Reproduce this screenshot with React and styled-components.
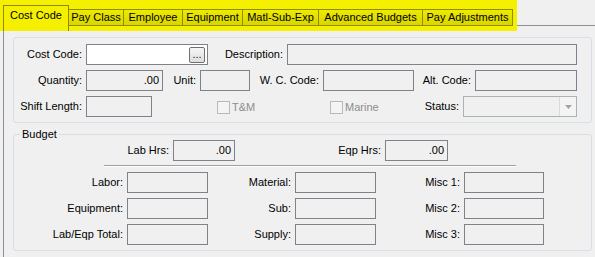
import React from "react";
import styled, { createGlobalStyle } from "styled-components";

const GlobalStyle = createGlobalStyle`
  html, body {
    margin: 0;
    padding: 0;
    background: #f0f0f0;
  }
  body {
    font-family: "Liberation Sans", Arial, sans-serif;
    font-size: 11px;
    color: #000;
  }
`;

const tabs = [
  { label: "Cost Code", w: 66, active: true },
  { label: "Pay Class", w: 56 },
  { label: "Employee", w: 60 },
  { label: "Equipment", w: 61 },
  { label: "Matl-Sub-Exp", w: 77 },
  { label: "Advanced Budgets", w: 105 },
  { label: "Pay Adjustments", w: 91 },
];

const Field = ({ label, lw, w, value, white, children }) => (
  <>
    <Label $w={lw}>{label}</Label>
    <TextBox $w={w} $white={white}>
      {value}
      {children}
    </TextBox>
  </>
);

const Check = ({ label, w }) => (
  <CheckItem $w={w}>
    <CheckBox />
    <span>{label}</span>
  </CheckItem>
);

const CostCodeTab = () => {
  return (
    <Window>
      <GlobalStyle />
      <TabHeader>
        <Highlight>
          {tabs.map((t) => (
            <Tab key={t.label} $w={t.w} $active={t.active}>
              {t.label}
            </Tab>
          ))}
        </Highlight>
        <HeaderRest />
      </TabHeader>

      <Pane>
        <Group>
          <Row>
            <Field label="Cost Code:" lw={72} w={122} white>
              <EllipsisButton>...</EllipsisButton>
            </Field>
            <Field label="Description:" lw={79} w={290} />
          </Row>
          <Row>
            <Field label="Quantity:" lw={72} w={77} value=".00" />
            <Field label="Unit:" lw={37} w={50} />
            <Field label="W. C. Code:" lw={73} w={91} />
            <Field label="Alt. Code:" lw={61} w={102} />
          </Row>
          <Row>
            <Field label="Shift Length:" lw={72} w={66} />
            <Spacer $w={65} />
            <Check label="T&M" w={113} />
            <Check label="Marine" w={93} />
            <Label $w={40}>Status:</Label>
            <Combo>
              <ComboButton>
                <svg width="7" height="4" viewBox="0 0 7 4">
                  <polygon points="0,0 7,0 3.5,4" fill="#a3a3a3" />
                </svg>
              </ComboButton>
            </Combo>
          </Row>
        </Group>

        <BudgetGroup>
          <Legend>Budget</Legend>
          <Row>
            <Field label="Lab Hrs:" lw={159} w={62} value=".00" />
            <Field label="Eqp Hrs:" lw={150} w={63} value=".00" />
          </Row>
          <Separator />
          <BudgetRows>
            <Row>
              <Field label="Labor:" lw={113} w={81} />
              <Field label="Material:" lw={87} w={81} />
              <Field label="Misc 1:" lw={88} w={80} />
            </Row>
            <Row>
              <Field label="Equipment:" lw={113} w={81} />
              <Field label="Sub:" lw={87} w={81} />
              <Field label="Misc 2:" lw={88} w={80} />
            </Row>
            <Row>
              <Field label="Lab/Eqp Total:" lw={113} w={81} />
              <Field label="Supply:" lw={87} w={81} />
              <Field label="Misc 3:" lw={88} w={80} />
            </Row>
          </BudgetRows>
        </BudgetGroup>
      </Pane>
    </Window>
  );
};

const Window = styled.div`
  width: 595px;
  height: 257px;
  overflow: hidden;
  background: #f0f0f0;
`;

const TabHeader = styled.div`
  display: flex;
  align-items: flex-start;
  height: 31px;
`;

const Highlight = styled.div`
  box-sizing: border-box;
  width: 517px;
  height: 31px;
  padding: 5px 0 0 3px;
  background: #f4f000;
  display: flex;
  align-items: flex-start;
`;

const HeaderRest = styled.div`
  flex: 1;
  box-sizing: border-box;
  height: 26px;
  border-bottom: 1px solid #8e9199;
`;

const Tab = styled.div`
  box-sizing: border-box;
  width: ${(p) => p.$w}px;
  height: ${(p) => (p.$active ? 26 : 17)}px;
  margin-top: ${(p) => (p.$active ? 0 : 4)}px;
  margin-left: -1px;
  &:first-child {
    margin-left: 0;
  }
  padding-top: ${(p) => (p.$active ? 3 : 1)}px;
  border: 1px solid #8f8c00;
  border-bottom: ${(p) => (p.$active ? "none" : "1px solid #8f8c00")};
  background: ${(p) =>
    p.$active ? "#f4f000" : "linear-gradient(#eeea00, #d9d500)"};
  text-align: center;
  line-height: 13px;
  white-space: nowrap;
`;

const Pane = styled.div`
  box-sizing: border-box;
  width: 592px;
  margin-left: 3px;
  padding: 6px 3px 0 9px;
  border-left: 1px solid #8e9199;
  height: 226px;
`;

const Group = styled.fieldset`
  margin: 0;
  min-width: 0;
  padding: 6px 0 5px;
  border: 1px solid #d5dfe5;
  border-radius: 3px;
  display: flex;
  flex-direction: column;
  gap: 5px;
`;

const BudgetGroup = styled.fieldset`
  margin: 5px 0 0;
  min-width: 0;
  padding: 0 0 5px;
  border: 1px solid #d5dfe5;
  border-radius: 3px;
`;

const Legend = styled.legend`
  margin-left: 6px;
  padding: 0 2px;
  line-height: 12px;
`;

const Row = styled.div`
  display: flex;
  align-items: center;
  height: 21px;
`;

const BudgetRows = styled.div`
  display: flex;
  flex-direction: column;
  gap: 5px;
  margin-top: 5px;
`;

const Separator = styled.div`
  width: 412px;
  height: 1px;
  margin: 4px 0 0 90px;
  background: #a0a0a0;
  border-bottom: 1px solid #ffffff;
`;

const Label = styled.label`
  box-sizing: border-box;
  flex: none;
  width: ${(p) => p.$w}px;
  padding-right: 4px;
  text-align: right;
  white-space: nowrap;
  line-height: 13px;
`;

const TextBox = styled.div`
  box-sizing: border-box;
  flex: none;
  width: ${(p) => p.$w}px;
  height: 21px;
  padding: 0 3px 0 2px;
  border: 1px solid #7f8289;
  background: ${(p) => (p.$white ? "#ffffff" : "#f0f0f0")};
  display: flex;
  align-items: center;
  justify-content: flex-end;
  line-height: 13px;
`;

const EllipsisButton = styled.div`
  box-sizing: border-box;
  width: 16px;
  height: 16px;
  margin-right: -1px;
  border: 1px solid #707070;
  border-radius: 2px;
  background: linear-gradient(#f6f6f6, #dddddd);
  font-size: 11px;
  line-height: 10px;
  padding-top: 1px;
  text-align: center;
  color: #222;
`;

const Spacer = styled.div`
  flex: none;
  width: ${(p) => p.$w}px;
`;

const CheckItem = styled.div`
  box-sizing: border-box;
  flex: none;
  width: ${(p) => p.$w}px;
  display: flex;
  align-items: center;
  gap: 2px;
  color: #8d8d8d;
  line-height: 13px;
  margin-top: 2px;
`;

const CheckBox = styled.span`
  box-sizing: border-box;
  width: 13px;
  height: 13px;
  border: 1px solid #b9b9b9;
  background: #f4f4f4;
`;

const Combo = styled.div`
  box-sizing: border-box;
  flex: none;
  width: 114px;
  height: 21px;
  border: 1px solid #adb2b5;
  background: #f0f0f0;
  display: flex;
  justify-content: flex-end;
`;

const ComboButton = styled.div`
  width: 16px;
  height: 100%;
  border-left: 1px solid #dadada;
  background: #f4f4f4;
  display: flex;
  align-items: center;
  justify-content: center;
`;

export default CostCodeTab;
